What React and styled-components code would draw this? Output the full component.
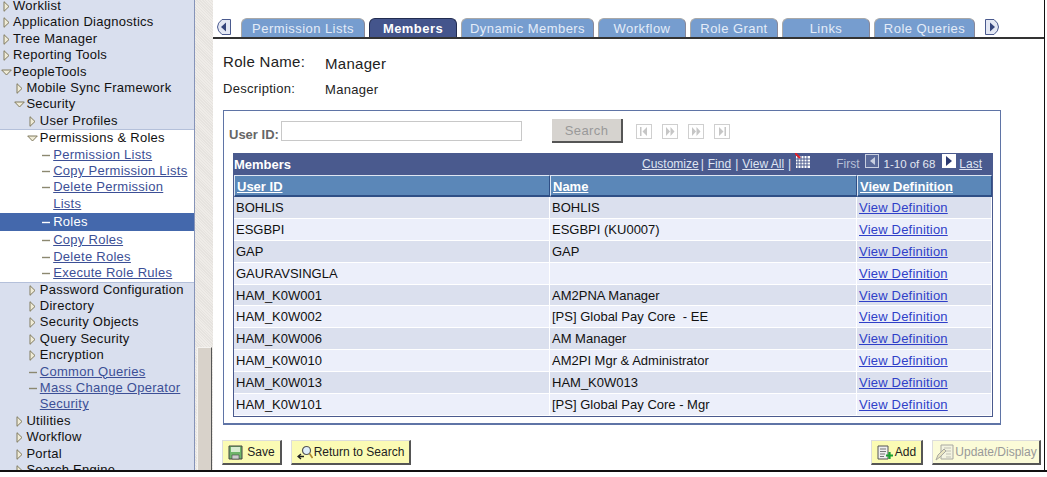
import React from 'react'
import styled, { createGlobalStyle } from 'styled-components'

const GlobalStyle = createGlobalStyle`
html, body { margin:0; padding:0; background:#fff; }
body { font-family:"Liberation Sans", Arial, sans-serif; overflow:hidden; }
`;

const Page = styled.div`
width:1047px;
height:477px;
overflow:hidden;
box-sizing:border-box;
`;
const Frame = styled.div`
display:flex;
height:472px;
box-sizing:border-box;
border-bottom:2px solid #111;
`;
const Sidebar = styled.nav`
width:195px;
flex:none;
overflow:hidden;
background:#d9dfee;
border-right:1px solid #8593b8;
box-sizing:border-box;
`;
const MenuList = styled.div`
margin-top:-2px;
display:flex;
flex-direction:column;
`;
const OpenGroup = styled.div`
background:#fff;
border-top:1px solid #b4c0da;
box-shadow:0 1px 0 #b4c0da;
`;
const Row = styled.div`
display:flex;
align-items:flex-start;
min-height:16.4px;
line-height:${p => p.$selected ? 18 : 16.4}px;
font-size:13px;
letter-spacing:.27px;
color:${p => p.$selected ? '#fff' : '#111'};
background:${p => p.$selected ? '#4468ac' : 'transparent'};
padding-left:${p => p.$level * 13.4}px;
padding-right:5px;
margin:${p => p.$selected ? '1px 0' : '0'};
`;
const Marker = styled.span`
width:12px;
flex:none;
display:flex;
justify-content:center;
padding-top:${p => p.$selected ? 4 : 3}px;
margin-right:1px;
`;
const MenuLink = styled.a`
color:#3c4f96;
text-decoration:underline;
`;
const Scroller = styled.div`
width:18px;
flex:none;
display:flex;
flex-direction:column;
background:repeating-linear-gradient(45deg,#efece8 0 1px,#e6e3df 1px 2px);
`;
const ScrollTrack = styled.div`
flex:1;
`;
const ScrollThumb = styled.div`
height:122px;
margin:0 1px 0 2px;
background:#d8d2ca;
border-top:1px solid #f5f3f0;
border-left:1px solid #f5f3f0;
border-right:1px solid #555;
`;
const Main = styled.main`
flex:1;
min-width:0;
margin-right:2px;
border-right:1px solid #111;
padding-top:18px;
`;
const TabBar = styled.div`
display:flex;
align-items:flex-start;
height:19px;
padding-left:4px;
border-bottom:2px solid #333;
`;
const TabArrow = styled.span`
width:14px;
height:16px;
flex:none;
margin:${p => p.$right ? '1px 0 0 10px' : '1px 10px 0 0'};
`;
const Tabs = styled.div`
display:flex;
gap:4px;
`;
const Tab = styled.div`
width:${p => p.$width}px;
height:19px;
box-sizing:border-box;
display:flex;
align-items:center;
justify-content:center;
font-size:13px;
letter-spacing:.45px;
font-weight:${p => p.$active ? 700 : 400};
color:${p => p.$active ? '#fff' : '#e4ecf8'};
background:${p => p.$active ? '#44558c' : '#769dcf'};
border-top:1px solid ${p => p.$active ? '#222c50' : '#a8a8a8'};
border-left:1px solid ${p => p.$active ? '#222c50' : '#a8a8a8'};
border-right:1px solid ${p => p.$active ? '#222c50' : '#889'};
border-radius:6px 6px 0 0;
`;
const Content = styled.div`
padding:11px 0 0 10px;
`;
const InfoRow = styled.div`
display:grid;
grid-template-columns:102px 1fr;
align-items:center;
color:#222;
letter-spacing:.3px;
font-size:${p => p.$big ? 15 : 13}px;
height:${p => p.$big ? 27 : 24}px;
`;
const InfoLabel = styled.span`
padding-bottom:${p => p.$big ? 4 : 1}px;
`;
const SearchPanel = styled.section`
width:778px;
height:315px;
margin-top:9px;
box-sizing:border-box;
border:1px solid #5f74a6;
border-bottom-width:2px;
padding:8px 6px 0 5px;
`;
const SearchRow = styled.div`
display:flex;
align-items:center;
height:24px;
`;
const SearchLabel = styled.label`
font-size:13px;
font-weight:700;
color:#666;
width:52px;
padding-top:6px;
white-space:nowrap;
`;
const SearchInput = styled.div`
width:241px;
height:20px;
box-sizing:border-box;
border:1px solid #c8c8c8;
`;
const SearchButton = styled.button`
width:71px;
height:24px;
margin-left:30px;
padding:0;
font:13px "Liberation Sans", Arial, sans-serif;
letter-spacing:.4px;
color:#999;
background:#d6d3cf;
border:none;
border-bottom:2px solid #555;
border-right:2px solid #555;
`;
const PagerIcons = styled.div`
display:flex;
gap:10px;
margin-left:13px;
`;
const Grid = styled.div`
width:760px;
margin:10px 0 0 4px;
background:#fff;
border:1px solid #4a5a8e;
border-top:none;
box-sizing:border-box;
`;
const GridBar = styled.div`
display:flex;
align-items:center;
height:22px;
padding:0 10px 0 0;
background:#4a5a8e;
color:#fff;
`;
const GridTitle = styled.strong`
font-size:13px;
flex:1;
`;
const GridLink = styled.a`
font-size:12px;
color:#dfe5f2;
text-decoration:underline;
margin-left:${p => p.$left || 0}px;
`;
const GridText = styled.span`
font-size:${p => p.$small ? 11.5 : 12}px;
color:${p => p.$dim ? '#b8c0d8' : '#e4e8f2'};
margin:${p => p.$margin || '0'};
`;
const GridCols = styled.div`
display:grid;
grid-template-columns:316px 307px 1fr;
`;
const HeadCell = styled.div`
height:22px;
line-height:19px;
box-sizing:border-box;
padding-left:2px;
background:#5b87b8;
border:1px solid #dfe6f2;
border-bottom:2px solid #2f4f86;
border-right:1px solid #2f4f86;
`;
const HeadLink = styled.a`
font-size:13px;
font-weight:700;
color:#fff;
text-decoration:underline;
`;
const Cell = styled.div`
height:21.9px;
line-height:21px;
box-sizing:border-box;
padding-left:2px;
font-size:13px;
color:#111;
background:${p => p.$odd ? '#dbe0ee' : '#eceffa'};
border-right:1px solid #fff;
border-bottom:1px solid #fff;
`;
const DefLink = styled.a`
font-size:13px;
letter-spacing:.2px;
color:#2f3fc8;
text-decoration:underline;
`;
const Toolbar = styled.div`
display:flex;
width:819px;
margin:15px 0 0 -1px;
`;
const ToolButton = styled.button`
display:flex;
align-items:center;
justify-content:center;
gap:${p => p.$gap ?? 4}px;
width:${p => p.$width}px;
height:25px;
margin-right:${p => p.$after ?? 9}px;
padding:0;
box-sizing:border-box;
font:12px "Liberation Sans", Arial, sans-serif;
color:${p => p.$disabled ? '#999' : '#222'};
background:${p => p.$disabled ? '#fbfbd8' : '#fbfbb4'};
border:1px solid #ddd;
border-right:2px solid #555;
border-bottom:2px solid #555;
`;
const Spacer = styled.div`
flex:1;
`;

const ClosedIcon = () => (
  <svg width="7" height="11" viewBox="0 0 7 11"><path d="M1 .7 6 5.5 1 10.3Z" fill="#f0ecd8" stroke="#807a5e" /></svg>
)
const OpenIcon = () => (
  <svg width="11" height="7" viewBox="0 0 11 7" style={{ marginTop: 2 }}><path d="M.7 1 5.5 6 10.3 1Z" fill="#f0ecd8" stroke="#807a5e" /></svg>
)
const LeafIcon = ({ light }) => (
  <svg width="8" height="7" viewBox="0 0 8 7" style={{ marginTop: 2 }}><path d="M0 3.5H8" stroke={light ? '#fff' : '#8c8870'} strokeWidth="1.4" /></svg>
)

const MenuRow = ({ level, kind, label, link, selected }) => (
  <Row $level={level} $selected={selected}>
    <Marker $selected={selected}>
      {kind === 'closed' && <ClosedIcon />}
      {kind === 'open' && <OpenIcon />}
      {kind === 'leaf' && <LeafIcon light={selected} />}
    </Marker>
    {link ? <MenuLink>{label}</MenuLink> : <span>{label}</span>}
  </Row>
)

const ArrowButton = ({ right }) => (
  <TabArrow $right={right}>
    <svg width="14" height="16" viewBox="0 0 14 16">
      <path d={right ? 'M.5.5H9Q13.5 4 13.5 8T9 15.5H.5Z' : 'M13.5.5H5Q.5 4 .5 8T5 15.5H13.5Z'} fill="#e4e8f4" stroke="#4a5a8e" />
      <path d={right ? 'M5 3.5 10 8 5 12.5Z' : 'M9 3.5 4 8 9 12.5Z'} fill="#35457c" />
    </svg>
  </TabArrow>
)

const PagerIcon = ({ d }) => (
  <svg width="16" height="15" viewBox="0 0 16 15">
    <rect x=".5" y=".5" width="15" height="14" fill="#fff" stroke="#cfcfcf" />
    <path d={d} fill="#c6c6c6" />
  </svg>
)

const SmallNav = ({ right, dim }) => (
  <svg width="14" height="14" viewBox="0 0 14 14" style={{ margin: '-6px 0 0' }}>
    <rect x=".5" y=".5" width="13" height="13" fill={dim ? '#5a6a9a' : '#fff'} stroke={dim ? '#c8cfe0' : '#fff'} />
    <path d={right ? 'M4 2 10 7 4 12Z' : 'M10 3 5 7 10 11Z'} fill={dim ? '#c8cfe0' : '#2c3a70'} />
  </svg>
)

const GridIcon = () => (
  <svg width="15" height="15" viewBox="0 0 15 15" style={{ margin: '-7px 0 0 4px' }}>
    <path d="M1 3h14v12H1z" fill="#fff" />
    <path d="M3 3v12M6 3v12M9 3v12M12 3v12M1 6h14M1 9h14M1 12h14" stroke="#4a5a8e" />
    <path d="M0 0 5 5" stroke="#e0202a" strokeWidth="2" />
  </svg>
)

const SaveIcon = () => (
  <svg width="15" height="15" viewBox="0 0 15 15">
    <path d="M1 1h13v13H1z" fill="#6fb56a" stroke="#444" />
    <path d="M3 2h9v5H3z" fill="#d8ecd0" />
    <path d="M4 10h7v4H4z" fill="#ccc" stroke="#444" strokeWidth=".6" />
  </svg>
)
const SearchIcon = () => (
  <svg width="16" height="15" viewBox="0 0 16 15">
    <circle cx="9.5" cy="5.5" r="4" fill="#dfeefa" stroke="#555" strokeWidth="1.2" />
    <path d="M12.5 8.5 15.5 13" stroke="#b08a30" strokeWidth="1.6" />
    <path d="M7 11.5H2M4 9 1 11.5 4 14" fill="none" stroke="#222" strokeWidth="1.3" />
  </svg>
)
const AddIcon = () => (
  <svg width="17" height="15" viewBox="0 0 17 15">
    <path d="M1 1h10v13H1z" fill="#eee" stroke="#555" />
    <path d="M3 4h6M3 6.5h6M3 9h5M3 11.5h4" stroke="#777" />
    <path d="M12.5 7v7M9 10.5h7" stroke="#19a030" strokeWidth="2.2" />
  </svg>
)
const UpdateIcon = () => (
  <svg width="19" height="17" viewBox="0 0 19 17">
    <path d="M6 1h12v14H6z" fill="#f4f4e0" stroke="#a8a8a0" />
    <path d="M9 4h7M9 7h7M11 10h5M11 13h5" stroke="#c0c0b4" />
    <path d="M1 16 3 11 9 5 11 7 5 13Z" fill="#e8e4c0" stroke="#a8a8a0" />
  </svg>
)

const topMenu = [
  [0, 'closed', 'Worklist'],
  [0, 'closed', 'Application Diagnostics'],
  [0, 'closed', 'Tree Manager'],
  [0, 'closed', 'Reporting Tools'],
  [0, 'open', 'PeopleTools'],
  [1, 'closed', 'Mobile Sync Framework'],
  [1, 'open', 'Security'],
  [2, 'closed', 'User Profiles'],
]
const openMenu = [
  [2, 'open', 'Permissions & Roles'],
  [3, 'leaf', 'Permission Lists', true],
  [3, 'leaf', 'Copy Permission Lists', true],
  [3, 'leaf', 'Delete Permission Lists', true],
  [3, 'leaf', 'Roles', false, true],
  [3, 'leaf', 'Copy Roles', true],
  [3, 'leaf', 'Delete Roles', true],
  [3, 'leaf', 'Execute Role Rules', true],
]
const bottomMenu = [
  [2, 'closed', 'Password Configuration'],
  [2, 'closed', 'Directory'],
  [2, 'closed', 'Security Objects'],
  [2, 'closed', 'Query Security'],
  [2, 'closed', 'Encryption'],
  [2, 'leaf', 'Common Queries', true],
  [2, 'leaf', 'Mass Change Operator Security', true],
  [1, 'closed', 'Utilities'],
  [1, 'closed', 'Workflow'],
  [1, 'closed', 'Portal'],
  [1, 'closed', 'Search Engine'],
]

const tabs = [
  ['Permission Lists', 124],
  ['Members', 88, true],
  ['Dynamic Members', 133],
  ['Workflow', 88],
  ['Role Grant', 88],
  ['Links', 88],
  ['Role Queries', 101],
]

const members = [
  ['BOHLIS', 'BOHLIS'],
  ['ESGBPI', 'ESGBPI (KU0007)'],
  ['GAP', 'GAP'],
  ['GAURAVSINGLA', ''],
  ['HAM_K0W001', 'AM2PNA Manager'],
  ['HAM_K0W002', '[PS] Global Pay Core\u00a0 - EE'],
  ['HAM_K0W006', 'AM Manager'],
  ['HAM_K0W010', 'AM2PI Mgr & Administrator'],
  ['HAM_K0W013', 'HAM_K0W013'],
  ['HAM_K0W101', '[PS] Global Pay Core - Mgr'],
]

const renderMenu = items => items.map(([level, kind, label, link, selected]) => (
  <MenuRow key={label} level={level} kind={kind} label={label} link={link} selected={selected} />
))

const App = () => {
  return (
    <Page>
      <GlobalStyle />
      <Frame>
        <Sidebar>
          <MenuList>
            {renderMenu(topMenu)}
            <OpenGroup>{renderMenu(openMenu)}</OpenGroup>
            {renderMenu(bottomMenu)}
          </MenuList>
        </Sidebar>
        <Scroller>
          <ScrollTrack />
          <ScrollThumb />
        </Scroller>
        <Main>
          <TabBar>
            <ArrowButton />
            <Tabs>
              {tabs.map(([label, width, active]) => (
                <Tab key={label} $width={width} $active={active}>{label}</Tab>
              ))}
            </Tabs>
            <ArrowButton right />
          </TabBar>
          <Content>
            <InfoRow $big><InfoLabel $big>Role Name:</InfoLabel><span>Manager</span></InfoRow>
            <InfoRow><InfoLabel>Description:</InfoLabel><span>Manager</span></InfoRow>
            <SearchPanel>
              <SearchRow>
                <SearchLabel>User ID:</SearchLabel>
                <SearchInput />
                <SearchButton>Search</SearchButton>
                <PagerIcons>
                  <PagerIcon d="M4 3h1.5v9H4zM11 3v9L6.5 7.5z" />
                  <PagerIcon d="M4 3v9l4-4.5zM8.5 3v9l4-4.5z" />
                  <PagerIcon d="M4 3v9l4-4.5zM8.5 3v9l4-4.5z" />
                  <PagerIcon d="M5 3v9l4.5-4.5zM10.5 3H12v9h-1.5z" />
                </PagerIcons>
              </SearchRow>
              <Grid>
                <GridBar>
                  <GridTitle>Members</GridTitle>
                  <GridLink>Customize</GridLink>
                  <GridText $margin="0 4px 0 2px"> | </GridText>
                  <GridLink>Find</GridLink>
                  <GridText $margin="0 4px"> | </GridText>
                  <GridLink>View All</GridLink>
                  <GridText $margin="0 0 0 4px"> | </GridText>
                  <GridIcon />
                  <GridText $dim $margin="0 5px 0 26px">First</GridText>
                  <SmallNav dim />
                  <GridText $small $margin="0 7px 0 5px">1-10 of 68</GridText>
                  <SmallNav right />
                  <GridLink $left={3}>Last</GridLink>
                </GridBar>
                <GridCols>
                  <HeadCell><HeadLink>User ID</HeadLink></HeadCell>
                  <HeadCell><HeadLink>Name</HeadLink></HeadCell>
                  <HeadCell><HeadLink>View Definition</HeadLink></HeadCell>
                  {members.map(([id, name], i) => (
                    <React.Fragment key={id}>
                      <Cell $odd={i % 2 === 0}>{id}</Cell>
                      <Cell $odd={i % 2 === 0}>{name}</Cell>
                      <Cell $odd={i % 2 === 0}><DefLink>View Definition</DefLink></Cell>
                    </React.Fragment>
                  ))}
                </GridCols>
              </Grid>
            </SearchPanel>
            <Toolbar>
              <ToolButton $width={60}><SaveIcon />Save</ToolButton>
              <ToolButton $width={120} $gap={1}><SearchIcon />Return to Search</ToolButton>
              <Spacer />
              <ToolButton $width={52} $gap={1}><AddIcon />Add</ToolButton>
              <ToolButton $width={109} $gap={1} $after={0} $disabled><UpdateIcon />Update/Display</ToolButton>
            </Toolbar>
          </Content>
        </Main>
      </Frame>
    </Page>
  )
}

export default App
